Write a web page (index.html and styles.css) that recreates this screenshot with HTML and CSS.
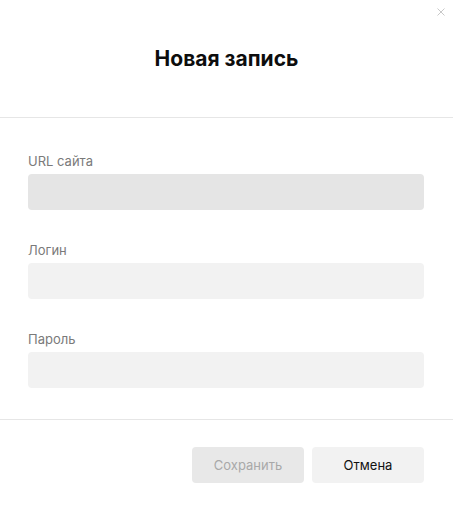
FILE: index.html
```html
<!DOCTYPE html>
<html lang="ru">
<head>
<meta charset="utf-8">
<title>Новая запись</title>
<link rel="stylesheet" href="styles.css">
</head>
<body>
<div class="modal">
  <button class="close" aria-label="Закрыть">
    <svg width="8" height="8" viewBox="0 0 8 8"><path d="M0.5 0.5L7.5 7.5M7.5 0.5L0.5 7.5" stroke="#c8c8c8" stroke-width="1" fill="none"/></svg>
  </button>
  <header class="head">
    <h1 class="title">Новая запись</h1>
  </header>
  <main class="body">
    <div class="field">
      <label class="label">URL сайта</label>
      <div class="input input-active"></div>
    </div>
    <div class="field">
      <label class="label">Логин</label>
      <div class="input"></div>
    </div>
    <div class="field">
      <label class="label">Пароль</label>
      <div class="input"></div>
    </div>
  </main>
  <footer class="foot">
    <button class="btn btn-save">Сохранить</button>
    <button class="btn btn-cancel">Отмена</button>
  </footer>
</div>
</body>
</html>
```
FILE: styles.css
```css
* { box-sizing: border-box; }
html, body { margin: 0; padding: 0; background: #fff; }
body { font-family: "Inter", "Noto Sans", sans-serif; color: #111; }
.modal { position: relative; width: 453px; height: 507px; background: #fff; }
.close {
  position: absolute; top: 8px; left: 437px;
  width: 8px; height: 8px; padding: 0; margin: 0;
  border: 0; background: none; display: block; line-height: 0;
}
.head {
  height: 118px; border-bottom: 1px solid #e6e6e6;
  display: flex; align-items: center; justify-content: center;
}
.title { margin: 0; font-size: 21px; font-weight: 700; line-height: 24px; padding-top: 1px; color: #0d0d0d; }
.body { padding: 35px 29px 31px 28px; border-bottom: 1px solid #e6e6e6; display: flex; flex-direction: column; gap: 32px; }
.field { display: flex; flex-direction: column; gap: 5px; }
.label { font-size: 13px; line-height: 16px; color: #7a7a7a; }
.input { height: 36px; border-radius: 4px; background: #f2f2f2; }
.input-active { background: #e5e5e5; }
.foot { display: flex; justify-content: flex-end; gap: 8px; padding: 27px 29px 0 0; }
.btn {
  width: 112px; height: 36px; border: 0; border-radius: 4px;
  font-family: "Inter", "Noto Sans", sans-serif; font-size: 13px; padding: 0;
}
.btn-save { background: #e8e8e8; color: #a8a8a8; }
.btn-cancel { background: #f2f2f2; color: #111; }
```
